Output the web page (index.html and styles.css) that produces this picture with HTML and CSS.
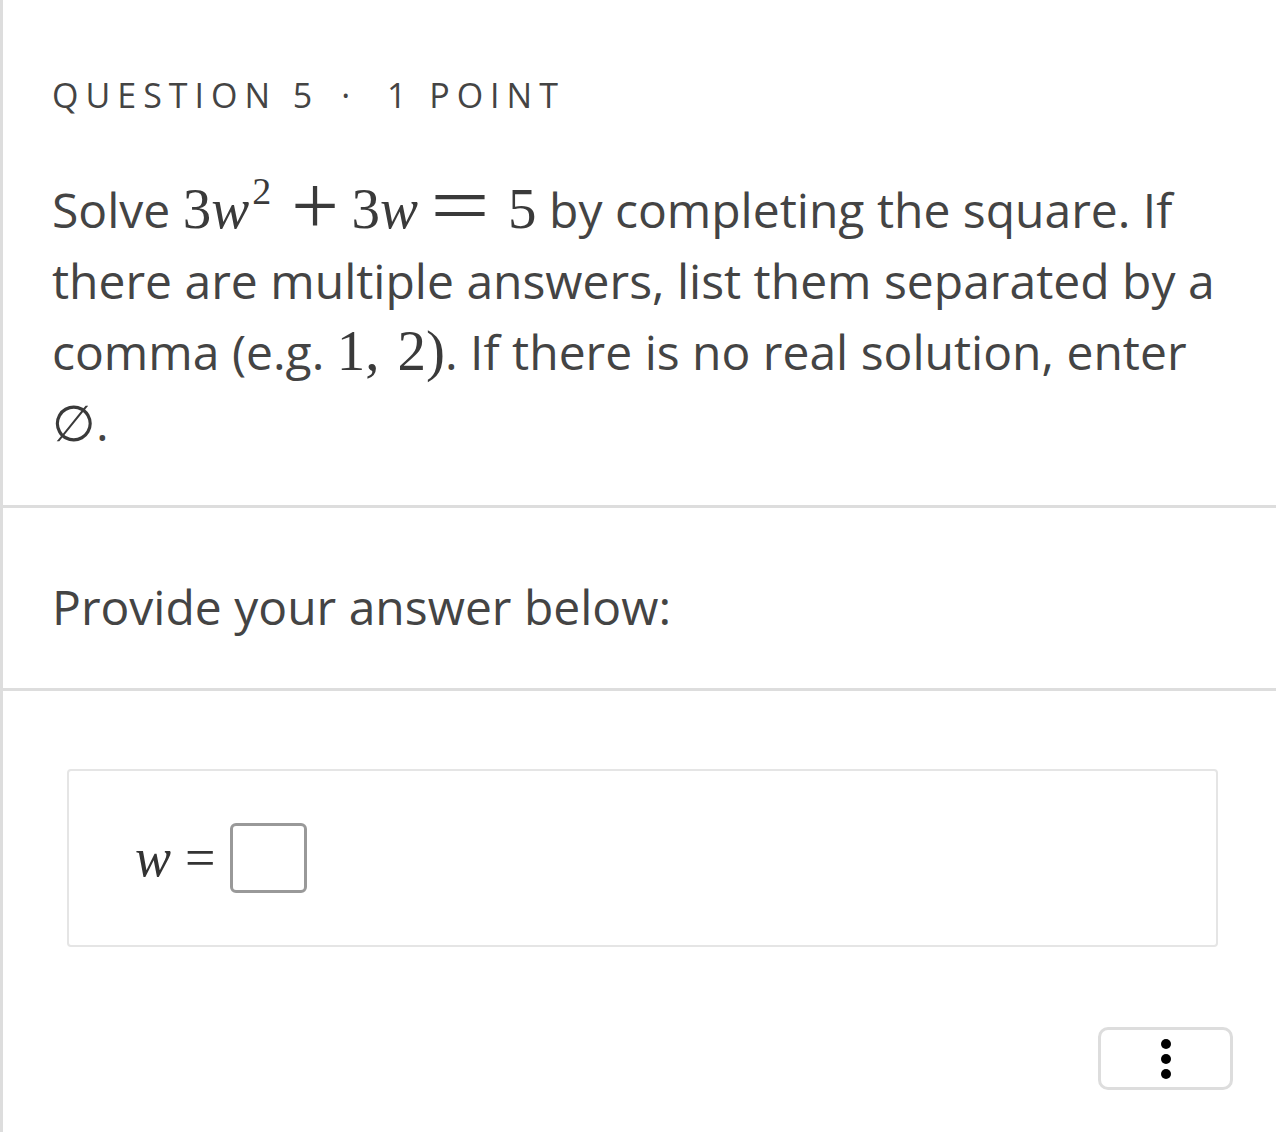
FILE: index.html
```html
<!DOCTYPE html>
<html>
<head>
<meta charset="utf-8">
<link rel="stylesheet" href="styles.css">
</head>
<body>
<div class="page">
  <section class="question">
    <div class="qhead">QUESTION 5 <span class="dot">·</span> 1 POINT</div>
    <p class="qtext">Solve <span class="m">3<i>w</i><sup>2</sup><span class="bin">+</span>3<i>w</i><span class="rel">=</span>5</span> by completing the square. If there are multiple answers, list them separated by a comma (e.g. <span class="m">1<span class="comma">,</span>2)</span>. If there is no real solution, enter <span class="m empty">∅</span>.</p>
  </section>
  <section class="prompt">Provide your answer below:</section>
  <section class="answer">
    <div class="answer-box">
      <span class="var">w</span><span class="eq">=</span><span class="input"></span>
    </div>
    <div class="footer">
      <button class="menu"><span></span><span></span><span></span></button>
    </div>
  </section>
</div>
</body>
</html>
```
FILE: styles.css
```css
html, body { margin: 0; padding: 0; background: #fff; }
body { font-family: "Open Sans", sans-serif; color: #444; }
.page { border-left: 3px solid #ddd; min-height: 1132px; box-sizing: border-box; }
.question { padding: 75px 51px 47px 49px; border-bottom: 3px solid #ddd; }
.qhead { font-size: 34px; letter-spacing: 7px; line-height: 40px; color: #444; }
.dot { margin: 0 14px 0 6px; }
.qtext { margin: 59px 0 0; font-size: 48px; line-height: 71px; }
.m { font-family: "Liberation Serif", serif; font-size: 57px; line-height: 1; color: #3a3a3a; }
.m i { font-style: italic; }
.m sup { font-size: 38px; vertical-align: 24px; line-height: 0; margin-left: 3px; }
.bin { display: inline-block; margin: 0 20px 0 28px; transform: translateY(-3px) scale(1.48); }
.rel { display: inline-block; margin: 0 32px 0 26px; transform: translateY(-4px) scale(1.85, 1.45); }
.comma { margin-right: 18px; }
.empty { font-family: "DejaVu Serif", serif; font-size: 50px; }
.prompt { padding: 63px 49px 46px; font-size: 48px; line-height: 71px; border-bottom: 3px solid #ddd; }
.answer { padding: 78px 58px 0 64px; }
.answer-box { border: 2px solid #e5e5e5; border-radius: 4px; height: 174px; display: flex; align-items: center; padding-left: 66px; }
.var { font-family: "Liberation Serif", serif; font-style: italic; font-size: 54px; color: #333; }
.eq { font-family: "Liberation Serif", serif; font-size: 54px; margin: 0 14px 0 14px; color: #333; }
.input { width: 71px; height: 64px; border: 3px solid #999; border-radius: 6px; }
.footer { display: flex; justify-content: flex-end; padding-top: 80px; margin-right: -15px; }
.menu { width: 135px; height: 63px; border: 3px solid #ddd; border-radius: 10px; background: #fff; display: flex; flex-direction: column; align-items: center; justify-content: center; gap: 5px; padding: 0; }
.menu span { width: 10px; height: 10px; border-radius: 50%; background: #000; }
```
